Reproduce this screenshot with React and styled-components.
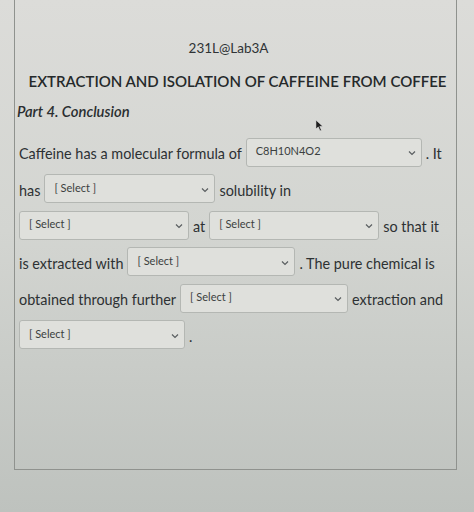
import React from 'react'
import styled, { createGlobalStyle } from 'styled-components'

const GlobalStyle = createGlobalStyle`
  html, body {
    margin: 0;
    padding: 0;
  }
  body {
    width: 474px;
    height: 512px;
    overflow: hidden;
    background: linear-gradient(180deg, #dcdcd9 0%, #d3d5d1 45%, #bec2be 100%);
    font-family: Lato, "Open Sans", sans-serif;
    color: #2e3233;
  }
`;

const rows = [
  [{ t: 'Caffeine has a molecular formula of' }, { s: 'C8H10N4O2', w: 176 }, { t: '. It' }],
  [{ t: 'has' }, { s: '[ Select ]', w: 171 }, { t: 'solubility in' }],
  [{ s: '[ Select ]', w: 170 }, { t: 'at' }, { s: '[ Select ]', w: 170 }, { t: 'so that it' }],
  [{ t: 'is extracted with' }, { s: '[ Select ]', w: 168 }, { t: '. The pure chemical is' }],
  [{ t: 'obtained through further' }, { s: '[ Select ]', w: 168 }, { t: 'extraction and' }],
  [{ s: '[ Select ]', w: 166 }, { t: '.' }],
];

export default function App() {
  return (
    <>
      <GlobalStyle />
      <Page>
        <Card>
          <Course>231L@Lab3A</Course>
          <Title>EXTRACTION AND ISOLATION OF CAFFEINE FROM COFFEE</Title>
          <Part>Part 4. Conclusion</Part>
          <Question>
            {rows.map((row, i) => (
              <Line key={i}>
                {row.map((item, j) =>
                  item.s ? (
                    <Dropdown key={j} $width={item.w}>
                      <DropdownText>{item.s}</DropdownText>
                      <Chevron viewBox="0 0 8 6">
                        <polyline points="1,1.5 4,4.5 7,1.5" />
                      </Chevron>
                    </Dropdown>
                  ) : (
                    <Words key={j}>{item.t}</Words>
                  )
                )}
              </Line>
            ))}
          </Question>
          <Cursor viewBox="0 0 10 14">
            <path d="M1 1 L1 11 L3.6 8.6 L5.6 13 L7.2 12.2 L5.3 8 L8.8 8 Z" />
          </Cursor>
        </Card>
      </Page>
    </>
  );
}

const Page = styled.div`
  padding: 0 17px 0 14px;
`;

const Card = styled.div`
  position: relative;
  height: 470px;
  box-sizing: border-box;
  border: 1px solid #8f928e;
  border-top: none;
  padding-top: 38px;
`;

const Course = styled.div`
  text-align: center;
  font-size: 13.5px;
  line-height: 20px;
  color: #2f3335;
  padding-right: 14px;
`;

const Title = styled.h2`
  margin: 12px 0 0;
  text-align: center;
  font-size: 15px;
  font-weight: 600;
  line-height: 22px;
  color: #25292a;
  padding-left: 4px;
`;

const Part = styled.h3`
  margin: 9px 0 0 2px;
  font-size: 14.8px;
  font-style: italic;
  font-weight: 600;
  line-height: 20px;
  color: #2a2e30;
`;

const Question = styled.div`
  margin-top: 16px;
  padding-left: 4px;
  display: flex;
  flex-direction: column;
  gap: 6.6px;
`;

const Line = styled.div`
  display: flex;
  align-items: center;
  gap: 4px;
  height: 30px;
`;

const Words = styled.span`
  font-size: 14.4px;
  line-height: 20px;
  padding-top: 4px;
  white-space: nowrap;
  color: #2d3133;
`;

const Dropdown = styled.div`
  box-sizing: border-box;
  width: ${p => p.$width}px;
  height: 29px;
  flex: none;
  display: flex;
  align-items: center;
  justify-content: space-between;
  padding: 0 5px 0 9px;
  border: 1px solid #b4b7b3;
  border-radius: 3px;
  background: #dfe0dc;
`;

const DropdownText = styled.span`
  font-size: 11px;
  color: #3b3f40;
  padding-bottom: 3px;
`;

const Chevron = styled.svg`
  width: 8px;
  height: 6px;
  margin-top: 2px;
  fill: none;
  stroke: #5a5e60;
  stroke-width: 1.2;
`;

const Cursor = styled.svg`
  position: absolute;
  left: 300px;
  top: 119px;
  width: 9px;
  height: 13px;
  fill: #1d1d1d;
  stroke: #f0f0f0;
  stroke-width: 0.6;
`;
